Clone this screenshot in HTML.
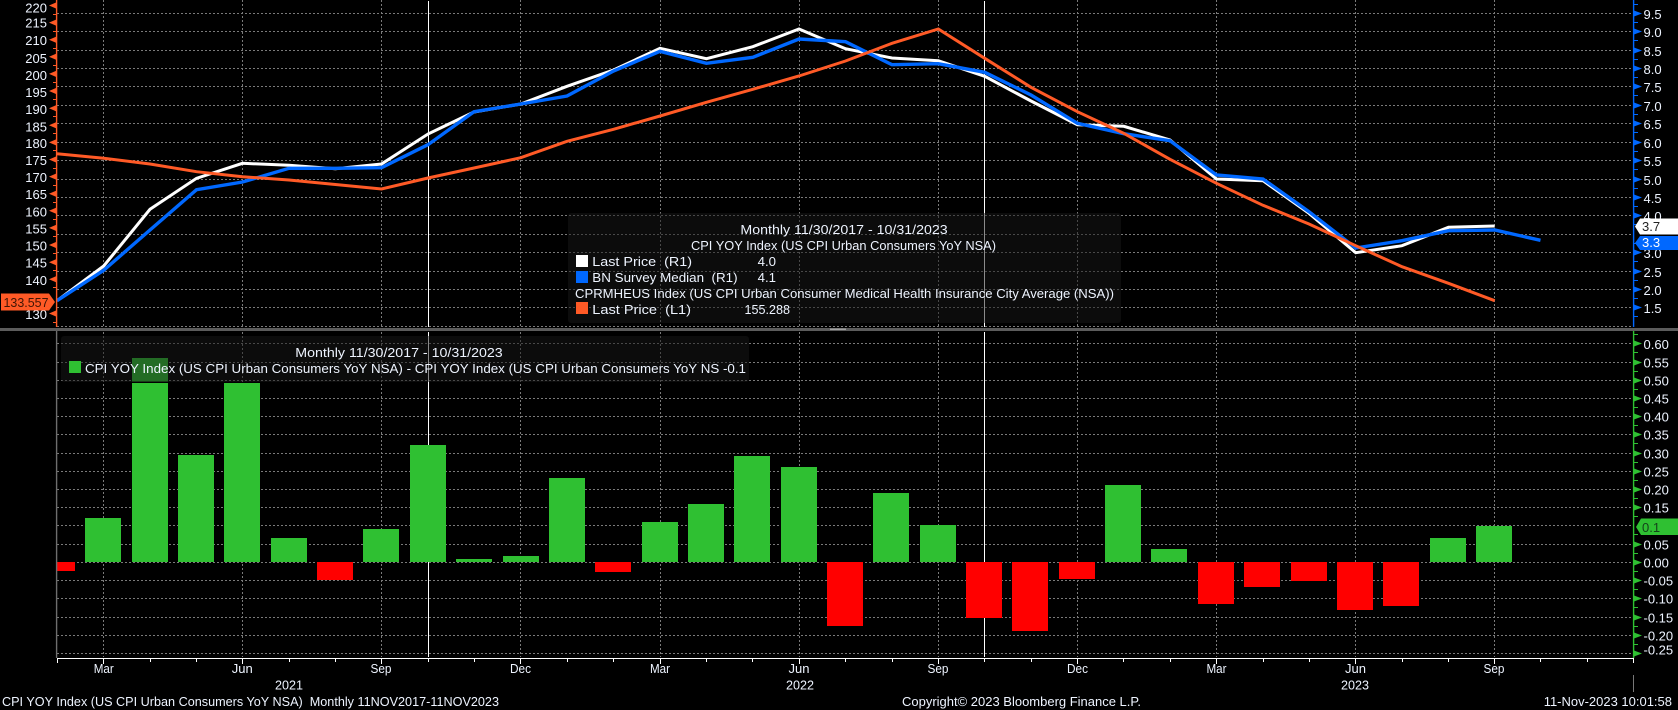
<!DOCTYPE html>
<html><head><meta charset="utf-8"><title>CPI YOY Index</title>
<style>
html,body{margin:0;padding:0;background:#000;width:1678px;height:710px;overflow:hidden}
svg{display:block}
text{font-family:"Liberation Sans",Arial,sans-serif;font-size:13px;fill:#eef4ff;white-space:pre}
.m{text-anchor:middle}
.e{text-anchor:end}
</style></head><body>
<svg width="1678" height="710" viewBox="0 0 1678 710" xmlns="http://www.w3.org/2000/svg">
<rect width="1678" height="710" fill="#000"/>
<!-- grid -->
<path fill="none" stroke="#7a7a7a" stroke-width="1" stroke-dasharray="2 2" d="M57 13.5H1633M57 31.5H1633M57 50.5H1633M57 68.5H1633M57 86.5H1633M57 105.5H1633M57 123.5H1633M57 142.5H1633M57 160.5H1633M57 179.5H1633M57 197.5H1633M57 215.5H1633M57 234.5H1633M57 252.5H1633M57 271.5H1633M57 289.5H1633M57 307.5H1633M57 326.5H1633
M57 343.5H1633M57 362.5H1633M57 380.5H1633M57 398.5H1633M57 416.5H1633M57 434.5H1633M57 453.5H1633M57 471.5H1633M57 489.5H1633M57 507.5H1633M57 525.5H1633M57 544.5H1633M57 562.5H1633M57 580.5H1633M57 598.5H1633M57 617.5H1633M57 635.5H1633M57 653.5H1633
M103.5 0V327M242.5 0V327M381.5 0V327M520.5 0V327M660.5 0V327M799.5 0V327M938.5 0V327M1077.5 0V327M1216.5 0V327M1355.5 0V327M1494.5 0V327
M103.5 332V657M242.5 332V657M381.5 332V657M520.5 332V657M660.5 332V657M799.5 332V657M938.5 332V657M1077.5 332V657M1216.5 332V657M1355.5 332V657M1494.5 332V657"/>
<!-- vertical cursors -->
<path stroke="#fff" stroke-width="1" fill="none" d="M428.5 1V327M984.5 1V327M428.5 332V657M984.5 332V657"/>
<!-- lines -->
<g fill="none" stroke-linejoin="miter" stroke-width="3">
<polyline stroke="#ffffff" points="57,300.7 103.7,266 150,209.3 196.5,178.3 242.5,163.3 289,165.3 335.4,168.7 381.5,164 428,134 474,112 520.8,104 567,86.3 613.5,70 660,48.3 706.4,58.7 752.8,46.7 799,29 845.5,48.7 892,58 938.3,60.7 984.7,76.3 1031,101 1077.4,124.7 1123.8,126.3 1170,140 1216.5,179 1263,180.7 1309,213.3 1355.7,252.7 1402,245.7 1448.5,227.3 1494.7,226"/>
<polyline stroke="#0068ff" stroke-width="3.4" points="57,300.7 103.7,270.3 150,230 196.5,189.7 242.5,182 289,168.3 335.4,168.3 381.5,167.7 428,144.7 474,111.7 520.8,104 567,96 613.5,71 660,51.3 706.4,63.3 752.8,57.3 799,39 845.5,41.7 892,64.7 938.3,63.7 984.7,72.3 1031,95 1077.4,123.3 1123.8,133.7 1170,140.7 1216.5,175 1263,179 1309,211.7 1355.7,248 1402,240.7 1448.5,230.7 1494.7,230 1540.5,240.3"/>
<polyline stroke="#ff5a26" points="57,153.7 103.7,158.3 150,164 196.5,171.7 242.5,176.7 289,180 335.4,184.5 381.5,189 428,178 474,168 520.8,157.7 567,141.3 613.5,129.3 660,116 706.4,102.3 752.8,89.3 799,76 845.5,61 892,43.3 938.3,29 984.7,58.3 1031,87.3 1077.4,111.7 1123.8,133.3 1170,159.3 1216.5,183.3 1263,205.3 1309,224 1355.7,245.7 1402,266.7 1448.5,283.3 1494.7,300.7"/>
</g>
<!-- bars green -->
<path fill="#2fc032" d="M85 518h36v44h-36zM132 358h36v204h-36zM178 455h36v107h-36zM224 383h36v179h-36zM271 538h36v24h-36zM363 529h36v33h-36zM410 445h36v117h-36zM456 559h36v3h-36zM503 556h36v6h-36zM549 478h36v84h-36zM642 522h36v40h-36zM688 504h36v58h-36zM734 456h36v106h-36zM781 467h36v95h-36zM873 493h36v69h-36zM920 525h36v37h-36zM1105 485h36v77h-36zM1151 549h36v13h-36zM1430 538h36v24h-36zM1476 526h36v36h-36z"/>
<!-- bars red -->
<path fill="#ff0000" d="M57 562h18v9h-18zM317 562h36v18h-36zM595 562h36v10h-36zM827 562h36v64h-36zM966 562h36v56h-36zM1012 562h36v69h-36zM1059 562h36v17h-36zM1198 562h36v42h-36zM1244 562h36v25h-36zM1291 562h36v19h-36zM1337 562h36v48h-36zM1383 562h36v44h-36z"/>
<rect x="132" y="381.5" width="36" height="1.5" fill="#000"/>
<!-- separator -->
<rect x="0" y="328" width="1678" height="3" fill="#5c5c5c"/>
<rect x="830" y="328.5" width="16" height="1.5" fill="#a0a0a0"/>
<!-- axes -->
<path stroke="#ff5a26" stroke-width="1.4" fill="none" d="M56.6 0V327"/>
<path stroke="#0068ff" stroke-width="1.4" fill="none" d="M1633.6 0V327"/>
<path stroke="#2fc032" stroke-width="1.4" fill="none" d="M1633.6 331V658"/>
<path stroke="#6e6e6e" stroke-width="1.4" fill="none" d="M56.6 331V658"/>
<path stroke="#fff" stroke-width="1" fill="none" d="M57 658.5H1634M57.5 658V663M103.5 658V664M150.5 658V662M196.5 658V662M242.5 658V664M289.5 658V662M335.5 658V662M381.5 658V664M428.5 658V662M474.5 658V662M520.5 658V664M567.5 658V662M613.5 658V662M660.5 658V664M706.5 658V662M752.5 658V662M799.5 658V664M845.5 658V662M892.5 658V662M938.5 658V664M984.5 658V662M1031.5 658V662M1077.5 658V664M1123.5 658V662M1170.5 658V662M1216.5 658V664M1263.5 658V662M1309.5 658V662M1355.5 658V664M1402.5 658V662M1448.5 658V662M1494.5 658V664M1540.5 658V662M1587.5 658V662M1633.5 658V663"/>
<path stroke="#777" stroke-width="1" fill="none" d="M1633.5 675V692"/>
<!-- left ticks -->
<path fill="#ff5a26" d="M49 5.5l7-3v6zM49 22.6l7-3v6zM49 39.7l7-3v6zM49 56.8l7-3v6zM49 73.9l7-3v6zM49 91l7-3v6zM49 108.2l7-3v6zM49 125.3l7-3v6zM49 142.4l7-3v6zM49 159.5l7-3v6zM49 176.6l7-3v6zM49 193.7l7-3v6zM49 210.8l7-3v6zM49 227.9l7-3v6zM49 245l7-3v6zM49 262.2l7-3v6zM49 279.3l7-3v6zM49 313.5l7-3v6z"/>
<path stroke="#ff5a26" stroke-width="1" fill="none" d="M53 14.5h4M53 31.5h4M53 48.5h4M53 65.5h4M53 82.5h4M53 99.5h4M53 116.5h4M53 133.5h4M53 150.5h4M53 168.5h4M53 185.5h4M53 202.5h4M53 219.5h4M53 236.5h4M53 253.5h4M53 270.5h4M53 287.5h4M53 322.5h4"/>
<!-- right ticks -->
<path fill="#0068ff" d="M1642 13.5l-8-3v6zM1642 31.5l-8-3v6zM1642 50.5l-8-3v6zM1642 68.5l-8-3v6zM1642 86.5l-8-3v6zM1642 105.5l-8-3v6zM1642 123.5l-8-3v6zM1642 142.5l-8-3v6zM1642 160.5l-8-3v6zM1642 179.5l-8-3v6zM1642 197.5l-8-3v6zM1642 215.5l-8-3v6zM1642 252.5l-8-3v6zM1642 271.5l-8-3v6zM1642 289.5l-8-3v6zM1642 307.5l-8-3v6z"/>
<path stroke="#0068ff" stroke-width="1" fill="none" d="M1634 4.5h4M1634 22.5h4M1634 40.5h4M1634 59.5h4M1634 77.5h4M1634 95.5h4M1634 114.5h4M1634 132.5h4M1634 151.5h4M1634 169.5h4M1634 188.5h4M1634 206.5h4M1634 224.5h4M1634 243.5h4M1634 261.5h4M1634 280.5h4M1634 298.5h4M1634 316.5h4"/>
<!-- lower right ticks -->
<path fill="#2fc032" d="M1642 343.5l-8-3v6zM1642 362.5l-8-3v6zM1642 380.5l-8-3v6zM1642 398.5l-8-3v6zM1642 416.5l-8-3v6zM1642 434.5l-8-3v6zM1642 453.5l-8-3v6zM1642 471.5l-8-3v6zM1642 489.5l-8-3v6zM1642 507.5l-8-3v6zM1642 544.5l-8-3v6zM1642 562.5l-8-3v6zM1642 580.5l-8-3v6zM1642 598.5l-8-3v6zM1642 617.5l-8-3v6zM1642 635.5l-8-3v6zM1642 653.5l-8-3v6z"/>
<path stroke="#2fc032" stroke-width="1" fill="none" d="M1634 334.5h4M1634 352.5h4M1634 371.5h4M1634 389.5h4M1634 407.5h4M1634 425.5h4M1634 443.5h4M1634 462.5h4M1634 480.5h4M1634 498.5h4M1634 516.5h4M1634 534.5h4M1634 553.5h4M1634 571.5h4M1634 589.5h4M1634 607.5h4M1634 626.5h4M1634 644.5h4"/>
<!-- legend panels -->
<rect x="568" y="213" width="553" height="110" rx="3" fill="rgb(23,23,23)" fill-opacity=".5"/>
<rect x="61" y="336" width="688" height="46" rx="3" fill="rgb(23,23,23)" fill-opacity=".5"/>
<!-- legend top -->
<text x="740.4" y="234" textLength="207.3" lengthAdjust="spacingAndGlyphs">Monthly 11/30/2017 - 10/31/2023</text>
<text x="691" y="250" textLength="305" lengthAdjust="spacingAndGlyphs">CPI YOY Index (US CPI Urban Consumers YoY NSA)</text>
<rect x="576" y="255" width="12" height="12" fill="#fff"/>
<text x="592.3" y="266" textLength="99.7" lengthAdjust="spacingAndGlyphs">Last Price  (R1)</text>
<text x="757.6" y="266" textLength="18.4" lengthAdjust="spacingAndGlyphs">4.0</text>
<rect x="576" y="271" width="12" height="12" fill="#0068ff"/>
<text x="592.3" y="282" textLength="145.3" lengthAdjust="spacingAndGlyphs">BN Survey Median  (R1)</text>
<text x="757.6" y="282" textLength="18.4" lengthAdjust="spacingAndGlyphs">4.1</text>
<text x="575" y="298" textLength="539" lengthAdjust="spacingAndGlyphs">CPRMHEUS Index (US CPI Urban Consumer Medical Health Insurance City Average (NSA))</text>
<rect x="576" y="302" width="12" height="12" fill="#ff5a26"/>
<text x="592.3" y="314" textLength="98.7" lengthAdjust="spacingAndGlyphs">Last Price  (L1)</text>
<text x="744.5" y="314" textLength="45.5" lengthAdjust="spacingAndGlyphs">155.288</text>
<!-- legend bottom -->
<text x="295.3" y="357" textLength="207.4" lengthAdjust="spacingAndGlyphs">Monthly 11/30/2017 - 10/31/2023</text>
<rect x="69" y="361" width="12" height="12" fill="#2fc032"/>
<text x="85" y="373" textLength="661" lengthAdjust="spacingAndGlyphs">CPI YOY Index (US CPI Urban Consumers YoY NSA) - CPI YOY Index (US CPI Urban Consumers YoY NS -0.1</text>
<!-- left labels -->
<g class="e">
<text class="e" x="47" y="12.7">220</text><text class="e" x="47" y="27.7">215</text><text class="e" x="47" y="44.8">210</text><text class="e" x="47" y="62.9">205</text><text class="e" x="47" y="79.9">200</text><text class="e" x="47" y="97">195</text><text class="e" x="47" y="114.2">190</text><text class="e" x="47" y="131.3">185</text><text class="e" x="47" y="147.9">180</text><text class="e" x="47" y="165">175</text><text class="e" x="47" y="182.1">170</text><text class="e" x="47" y="199.2">165</text><text class="e" x="47" y="216.3">160</text><text class="e" x="47" y="233.4">155</text><text class="e" x="47" y="250.5">150</text><text class="e" x="47" y="267.7">145</text><text class="e" x="47" y="284.8">140</text><text class="e" x="47" y="319">130</text>
</g>
<polygon points="1,293.5 49,293.5 55,302 49,310.5 1,310.5" fill="#ff5a26"/>
<text x="3.5" y="307" textLength="45" lengthAdjust="spacingAndGlyphs" style="fill:#401505">133.557</text>
<!-- right labels -->
<text x="1643.5" y="19">9.5</text><text x="1643.5" y="37">9.0</text><text x="1643.5" y="56">8.5</text><text x="1643.5" y="74">8.0</text><text x="1643.5" y="92">7.5</text><text x="1643.5" y="111">7.0</text><text x="1643.5" y="129">6.5</text><text x="1643.5" y="148">6.0</text><text x="1643.5" y="166">5.5</text><text x="1643.5" y="185">5.0</text><text x="1643.5" y="203">4.5</text><text x="1643.5" y="221">4.0</text><text x="1643.5" y="258">3.0</text><text x="1643.5" y="277">2.5</text><text x="1643.5" y="295">2.0</text><text x="1643.5" y="313">1.5</text>
<polygon points="1635,226.5 1640,218.5 1678,218.5 1678,234.5 1640,234.5" fill="#fff"/>
<text x="1642" y="231" style="fill:#222">3.7</text>
<polygon points="1635,243 1640,236 1678,236 1678,250 1640,250" fill="#0068ff"/>
<text x="1642" y="247" style="fill:#fff">3.3</text>
<!-- lower right labels -->
<text x="1643.5" y="349">0.60</text><text x="1643.5" y="367.5">0.55</text><text x="1643.5" y="385.5">0.50</text><text x="1643.5" y="403.5">0.45</text><text x="1643.5" y="421.5">0.40</text><text x="1643.5" y="439.5">0.35</text><text x="1643.5" y="458.5">0.30</text><text x="1643.5" y="476.5">0.25</text><text x="1643.5" y="494.5">0.20</text><text x="1643.5" y="512.5">0.15</text><text x="1643.5" y="549.5">0.05</text><text x="1643.5" y="567.5">0.00</text><text x="1643.5" y="585.5">-0.05</text><text x="1643.5" y="603.5">-0.10</text><text x="1643.5" y="622.5">-0.15</text><text x="1643.5" y="640.5">-0.20</text><text x="1643.5" y="654.5">-0.25</text>
<polygon points="1636,527 1641,518.5 1678,518.5 1678,535 1641,535" fill="#2fc032"/>
<text x="1642" y="532" style="fill:#14421a">0.1</text>
<!-- x labels -->
<text class="m" x="103.7" y="673" textLength="20" lengthAdjust="spacingAndGlyphs">Mar</text><text class="m" x="242.3" y="673" textLength="21" lengthAdjust="spacingAndGlyphs">Jun</text><text class="m" x="381" y="673" textLength="21" lengthAdjust="spacingAndGlyphs">Sep</text><text class="m" x="520.5" y="673" textLength="21" lengthAdjust="spacingAndGlyphs">Dec</text><text class="m" x="660" y="673" textLength="20" lengthAdjust="spacingAndGlyphs">Mar</text><text class="m" x="799" y="673" textLength="21" lengthAdjust="spacingAndGlyphs">Jun</text><text class="m" x="938" y="673" textLength="21" lengthAdjust="spacingAndGlyphs">Sep</text><text class="m" x="1077.5" y="673" textLength="21" lengthAdjust="spacingAndGlyphs">Dec</text><text class="m" x="1216.5" y="673" textLength="20" lengthAdjust="spacingAndGlyphs">Mar</text><text class="m" x="1355.5" y="673" textLength="21" lengthAdjust="spacingAndGlyphs">Jun</text><text class="m" x="1494" y="673" textLength="21" lengthAdjust="spacingAndGlyphs">Sep</text>
<text class="m" x="289" y="689.5" textLength="28" lengthAdjust="spacingAndGlyphs">2021</text><text class="m" x="800" y="689.5" textLength="28" lengthAdjust="spacingAndGlyphs">2022</text><text class="m" x="1355" y="689.5" textLength="28" lengthAdjust="spacingAndGlyphs">2023</text>
<!-- footer -->
<text x="2" y="706" textLength="497" lengthAdjust="spacingAndGlyphs">CPI YOY Index (US CPI Urban Consumers YoY NSA)  Monthly 11NOV2017-11NOV2023</text>
<text x="902" y="706" textLength="239" lengthAdjust="spacingAndGlyphs">Copyright© 2023 Bloomberg Finance L.P.</text>
<text x="1543.7" y="706" textLength="128.3" lengthAdjust="spacingAndGlyphs">11-Nov-2023 10:01:58</text>
</svg>
</body></html>
